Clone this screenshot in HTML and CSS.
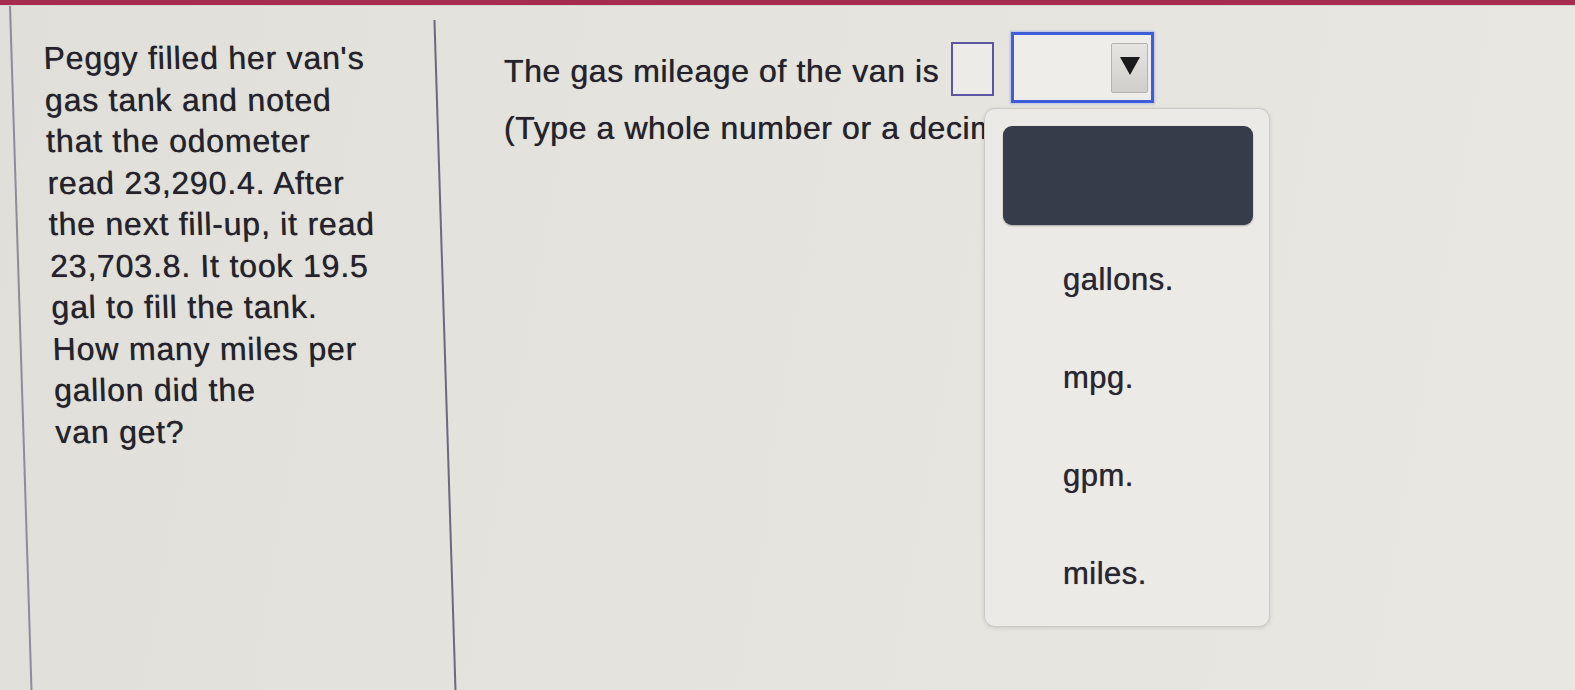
FILE: index.html
```html
<!DOCTYPE html>
<html lang="en">
<head>
<meta charset="utf-8">
<title>Gas mileage question</title>
<link rel="stylesheet" href="styles.css">
</head>
<body>
<div class="topbar"></div>
<div class="main">
  <div class="left-block">
    <div class="edge"></div>
    <div class="question">
      <p class="qtext">Peggy filled her van's<br>gas tank and noted<br>that the odometer<br>read 23,290.4. After<br>the next fill-up, it read<br>23,703.8. It took 19.5<br>gal to fill the tank.<br>How many miles per<br>gallon did the<br>van get?</p>
    </div>
  </div>
  <div class="answer">
    <div class="row">
      <span class="atext">The gas mileage of the van is</span>
      <span class="numbox"></span>
      <span class="select">
        <span class="arrowbtn"><svg width="22" height="22" viewBox="0 0 22 22"><polygon points="1,3 21,3 11,21" fill="#1a1a1c"/></svg></span>
      </span>
    </div>
    <div class="hint">(Type a whole number or a decimal.)</div>
    <div class="popup">
      <div class="opt selected"></div>
      <div class="opt">gallons.</div>
      <div class="opt">mpg.</div>
      <div class="opt">gpm.</div>
      <div class="opt">miles.</div>
    </div>
  </div>
</div>
</body>
</html>
```

FILE: styles.css
```css
html, body {
  margin: 0;
  padding: 0;
}
body {
  width: 1575px;
  height: 690px;
  overflow: hidden;
  background: linear-gradient(100deg, #e0dfd9 0%, #e4e3de 40%, #e8e7e2 100%);
  font-family: "Liberation Sans", Arial, sans-serif;
  color: #25222b;
}
.topbar {
  height: 5px;
  background: #a62b4e;
  border-bottom: 1px solid #d9d3d3;
}
.main {
  display: flex;
  height: 684px;
  position: relative;
}
.left-block {
  display: flex;
  flex-shrink: 0;
  transform: skewX(1.8deg);
  transform-origin: top left;
}
.edge {
  width: 9px;
  border-right: 2px solid #8e8b9b;
}
.question {
  width: 391px;
  margin-top: 14px;
  border-right: 2px solid #6c6880;
  padding: 0 0 0 31px;
}
.qtext {
  margin: 18px 0 0 0;
  font-size: 32px;
  line-height: 41.5px;
  letter-spacing: 0.8px;
  white-space: nowrap;
  text-shadow: 0 0 0.7px rgba(30, 28, 36, 0.85);
}
.answer {
  flex: 1;
  padding: 26px 0 0 69px;
  position: relative;
}
.row {
  display: flex;
  align-items: center;
  height: 71px;
}
.atext {
  font-size: 32px;
  letter-spacing: 0.6px;
  white-space: nowrap;
  padding-top: 8px;
  text-shadow: 0 0 0.7px rgba(30, 28, 36, 0.85);
}
.numbox {
  width: 39px;
  height: 50px;
  margin-left: 12px;
  border: 2px solid #5d54a2;
  background: #ecebe7;
  margin-top: 3px;
}
.select {
  width: 134px;
  height: 65px;
  margin-left: 17px;
  border: 3px solid #3d5ed6;
  box-shadow: 0 0 2px 1px rgba(90, 120, 230, 0.35);
  background: #eeede9;
  display: flex;
  align-items: center;
  justify-content: flex-end;
  padding-right: 3px;
  box-sizing: content-box;
}
.arrowbtn {
  width: 37px;
  height: 50px;
  border: 1px solid #b4b3b0;
  border-radius: 2px;
  background: linear-gradient(#e6e5e2, #cfcecb);
  display: flex;
  justify-content: center;
  align-items: flex-start;
  padding-top: 10px;
  box-sizing: border-box;
}
.hint {
  margin-top: 4px;
  font-size: 32px;
  line-height: 42px;
  letter-spacing: 0.6px;
  white-space: nowrap;
  text-shadow: 0 0 0.7px rgba(30, 28, 36, 0.85);
}
.popup {
  position: absolute;
  left: 549px;
  top: 102px;
  width: 286px;
  height: 519px;
  background: #eceae6;
  border: 1px solid #cdcbc6;
  border-radius: 11px;
  box-shadow: 0 1px 4px rgba(0, 0, 0, 0.12);
  padding: 17px 16px 0 18px;
  box-sizing: border-box;
  display: flex;
  flex-direction: column;
}
.opt {
  height: 98px;
  display: flex;
  align-items: center;
  padding-left: 60px;
  font-size: 31px;
  letter-spacing: 0.5px;
  color: #2a2631;
  flex-shrink: 0;
  text-shadow: 0 0 0.7px rgba(30, 28, 36, 0.85);
}
.opt.selected {
  height: 99px;
  margin-bottom: 6px;
  background: #373c4a;
  border-radius: 9px;
  box-shadow: 0 1px 2px rgba(0, 0, 0, 0.3);
}
```
